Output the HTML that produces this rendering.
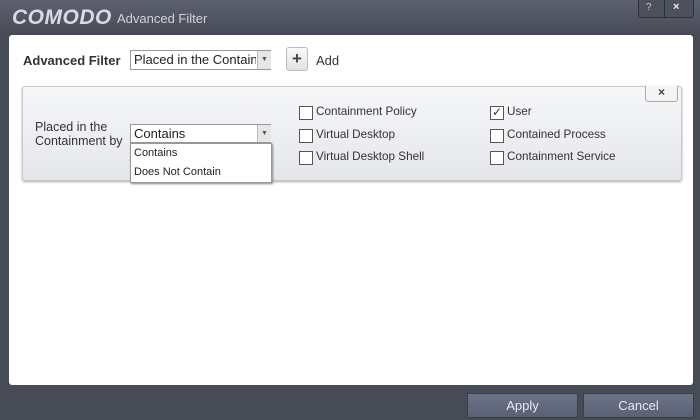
<!DOCTYPE html><html><head><style>
body{margin:0;width:700px;height:420px;background:#474b55;font-family:"Liberation Sans",sans-serif;position:relative;overflow:hidden}
.a{position:absolute}
.t{background:linear-gradient(#5d6170,#474b57);left:0;top:0;width:700px;height:35px}
.cb{width:14px;height:14px;border:1px solid #555;background:#fff;box-sizing:border-box}
.lb{font-size:11.7px;color:#333}
.btn{background:linear-gradient(#6c7387,#5a6175);border:1px solid #3a3e48;color:#e8e8ee;font-size:13px;text-align:center;line-height:24px;box-sizing:border-box}
</style></head><body>
<div class="a t"></div>
<div class="a" style="left:12px;top:6px;font-size:21px;font-weight:bold;font-style:italic;color:#d8dbe2;letter-spacing:0.5px">COMODO</div>
<div class="a" style="left:117px;top:11px;font-size:13px;color:#d0d3da">Advanced Filter</div>
<div class="a" style="left:638px;top:0;width:54px;height:17px;border:1px solid #2e3038;border-top:none;background:#4d515c;border-radius:0 0 3px 3px"></div>
<div class="a" style="left:664px;top:0;width:1px;height:17px;background:#2e3038"></div>
<div class="a" style="left:646px;top:2px;font-size:10px;color:#ccc">?</div>
<div class="a" style="left:673px;top:1px;font-size:11px;color:#eee;font-weight:bold">×</div>
<div class="a" style="left:9px;top:35px;width:684px;height:350px;background:#fff;border-radius:3px"></div>
<div class="a" style="left:23px;top:53px;font-size:13px;font-weight:bold;color:#333">Advanced Filter</div>
<div class="a" style="left:130px;top:50px;width:141px;height:20px;border:1px solid #999;box-sizing:border-box;background:#fff"></div>
<div class="a" style="left:134px;top:52px;font-size:13px;color:#222;width:122px;overflow:hidden;white-space:nowrap">Placed in the Containment</div>
<div class="a" style="left:257px;top:51px;width:13px;height:18px;background:#e6e6e6;border-left:1px solid #bbb;font-size:7px;color:#555;text-align:center;line-height:18px">▼</div>
<div class="a" style="left:286px;top:47px;width:22px;height:24px;border:1px solid #bbb;border-radius:3px;background:linear-gradient(#fafafa,#e2e2e2);box-sizing:border-box;text-align:center;font-weight:bold;font-size:17px;color:#444;line-height:22px">+</div>
<div class="a" style="left:316px;top:53px;font-size:13px;color:#333">Add</div>
<div class="a" style="left:22px;top:86px;width:660px;height:95px;border:1px solid #c5c8cf;border-radius:3px;box-sizing:border-box;background:linear-gradient(#f6f7f9,#e4e6ea);box-shadow:0 1px 2px #aaa"></div>
<div class="a" style="left:645px;top:86px;width:31px;height:15px;border:1px solid #aaa;border-top:none;border-radius:0 0 3px 3px;background:#f4f4f4;text-align:center;font-size:12px;font-weight:bold;color:#444;line-height:13px">×</div>
<div class="a lb" style="left:35px;top:120px;font-size:12.5px;line-height:14px">Placed in the<br>Containment by</div>
<div class="a" style="left:130px;top:124px;width:141px;height:19px;border:1px solid #999;box-sizing:border-box;background:#fff"></div>
<div class="a" style="left:134px;top:126px;font-size:13px;color:#222">Contains</div>
<div class="a" style="left:257px;top:125px;width:13px;height:17px;background:#e6e6e6;border-left:1px solid #bbb;font-size:7px;color:#555;text-align:center;line-height:17px">▼</div>
<div class="a" style="left:130px;top:143px;width:140px;height:38px;border:1px solid #999;background:#fff;box-shadow:1px 1px 2px #888"></div>
<div class="a" style="left:134px;top:147px;font-size:11px;color:#222">Contains</div>
<div class="a" style="left:134px;top:166px;font-size:11px;color:#222">Does Not Contain</div>
<div class="a cb" style="left:299px;top:106px"></div><div class="a lb" style="left:316px;top:105px">Containment Policy</div>
<div class="a cb" style="left:299px;top:129px"></div><div class="a lb" style="left:316px;top:128px">Virtual Desktop</div>
<div class="a cb" style="left:299px;top:151px"></div><div class="a lb" style="left:316px;top:150px">Virtual Desktop Shell</div>
<div class="a cb" style="left:490px;top:106px;font-size:12px;line-height:11px;text-align:center;color:#333">✓</div><div class="a lb" style="left:507px;top:105px">User</div>
<div class="a cb" style="left:490px;top:129px"></div><div class="a lb" style="left:507px;top:128px">Contained Process</div>
<div class="a cb" style="left:490px;top:151px"></div><div class="a lb" style="left:507px;top:150px">Containment Service</div>
<div class="a btn" style="left:467px;top:393px;width:111px;height:25px">Apply</div>
<div class="a btn" style="left:583px;top:393px;width:111px;height:25px">Cancel</div>
</body></html>
